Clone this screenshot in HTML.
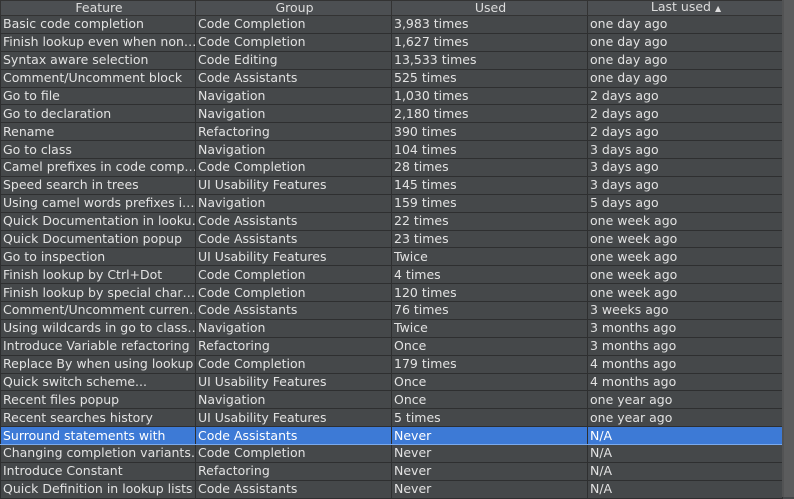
<!DOCTYPE html><html><head><style>
body{margin:0;width:794px;height:497px;overflow:hidden;background:#45484a;font-family:"DejaVu Sans","Liberation Sans",sans-serif;font-size:12.5px;color:#e2e2e2}
.sb{position:absolute;left:782px;top:0;width:12px;height:497px;background:#5b5c5d;border-left:2px solid #525354}
table{position:absolute;left:0;top:0;border-collapse:collapse;width:782px;table-layout:fixed}
td,th{border:1px solid #2e2f30;padding:0 0 0 2px;height:16.88px;line-height:16px;white-space:nowrap;overflow:hidden}
th{font-weight:normal;height:12.5px;line-height:12px;background:#4c4f52;color:#ddd;border-color:#333;text-align:center}
tr.sel td{background:#3d7ad6;color:#fff;border-top:1px solid #7aaaee;border-bottom:1px solid #7aaaee}
tr.sel td:last-child{border-right:1px solid #7aaaee}
</style></head><body>
<table>
<colgroup><col style="width:195px"><col style="width:196px"><col style="width:196px"><col style="width:195px"></colgroup>
<tr><th>Feature</th><th>Group</th><th>Used</th><th>Last used <span style="font-size:8px">▲</span></th></tr>
<tr><td>Basic code completion</td><td>Code Completion</td><td>3,983 times</td><td>one day ago</td></tr>
<tr><td>Finish lookup even when non…</td><td>Code Completion</td><td>1,627 times</td><td>one day ago</td></tr>
<tr><td>Syntax aware selection</td><td>Code Editing</td><td>13,533 times</td><td>one day ago</td></tr>
<tr><td>Comment/Uncomment block</td><td>Code Assistants</td><td>525 times</td><td>one day ago</td></tr>
<tr><td>Go to file</td><td>Navigation</td><td>1,030 times</td><td>2 days ago</td></tr>
<tr><td>Go to declaration</td><td>Navigation</td><td>2,180 times</td><td>2 days ago</td></tr>
<tr><td>Rename</td><td>Refactoring</td><td>390 times</td><td>2 days ago</td></tr>
<tr><td>Go to class</td><td>Navigation</td><td>104 times</td><td>3 days ago</td></tr>
<tr><td>Camel prefixes in code comp…</td><td>Code Completion</td><td>28 times</td><td>3 days ago</td></tr>
<tr><td>Speed search in trees</td><td>UI Usability Features</td><td>145 times</td><td>3 days ago</td></tr>
<tr><td>Using camel words prefixes i…</td><td>Navigation</td><td>159 times</td><td>5 days ago</td></tr>
<tr><td>Quick Documentation in looku…</td><td>Code Assistants</td><td>22 times</td><td>one week ago</td></tr>
<tr><td>Quick Documentation popup</td><td>Code Assistants</td><td>23 times</td><td>one week ago</td></tr>
<tr><td>Go to inspection</td><td>UI Usability Features</td><td>Twice</td><td>one week ago</td></tr>
<tr><td>Finish lookup by Ctrl+Dot</td><td>Code Completion</td><td>4 times</td><td>one week ago</td></tr>
<tr><td>Finish lookup by special char…</td><td>Code Completion</td><td>120 times</td><td>one week ago</td></tr>
<tr><td>Comment/Uncomment curren…</td><td>Code Assistants</td><td>76 times</td><td>3 weeks ago</td></tr>
<tr><td>Using wildcards in go to class…</td><td>Navigation</td><td>Twice</td><td>3 months ago</td></tr>
<tr><td>Introduce Variable refactoring</td><td>Refactoring</td><td>Once</td><td>3 months ago</td></tr>
<tr><td>Replace By when using lookup</td><td>Code Completion</td><td>179 times</td><td>4 months ago</td></tr>
<tr><td>Quick switch scheme...</td><td>UI Usability Features</td><td>Once</td><td>4 months ago</td></tr>
<tr><td>Recent files popup</td><td>Navigation</td><td>Once</td><td>one year ago</td></tr>
<tr><td>Recent searches history</td><td>UI Usability Features</td><td>5 times</td><td>one year ago</td></tr>
<tr class="sel"><td>Surround statements with</td><td>Code Assistants</td><td>Never</td><td>N/A</td></tr>
<tr><td>Changing completion variants…</td><td>Code Completion</td><td>Never</td><td>N/A</td></tr>
<tr><td>Introduce Constant</td><td>Refactoring</td><td>Never</td><td>N/A</td></tr>
<tr><td>Quick Definition in lookup lists</td><td>Code Assistants</td><td>Never</td><td>N/A</td></tr>
</table>
<div class="sb"></div>
</body></html>
